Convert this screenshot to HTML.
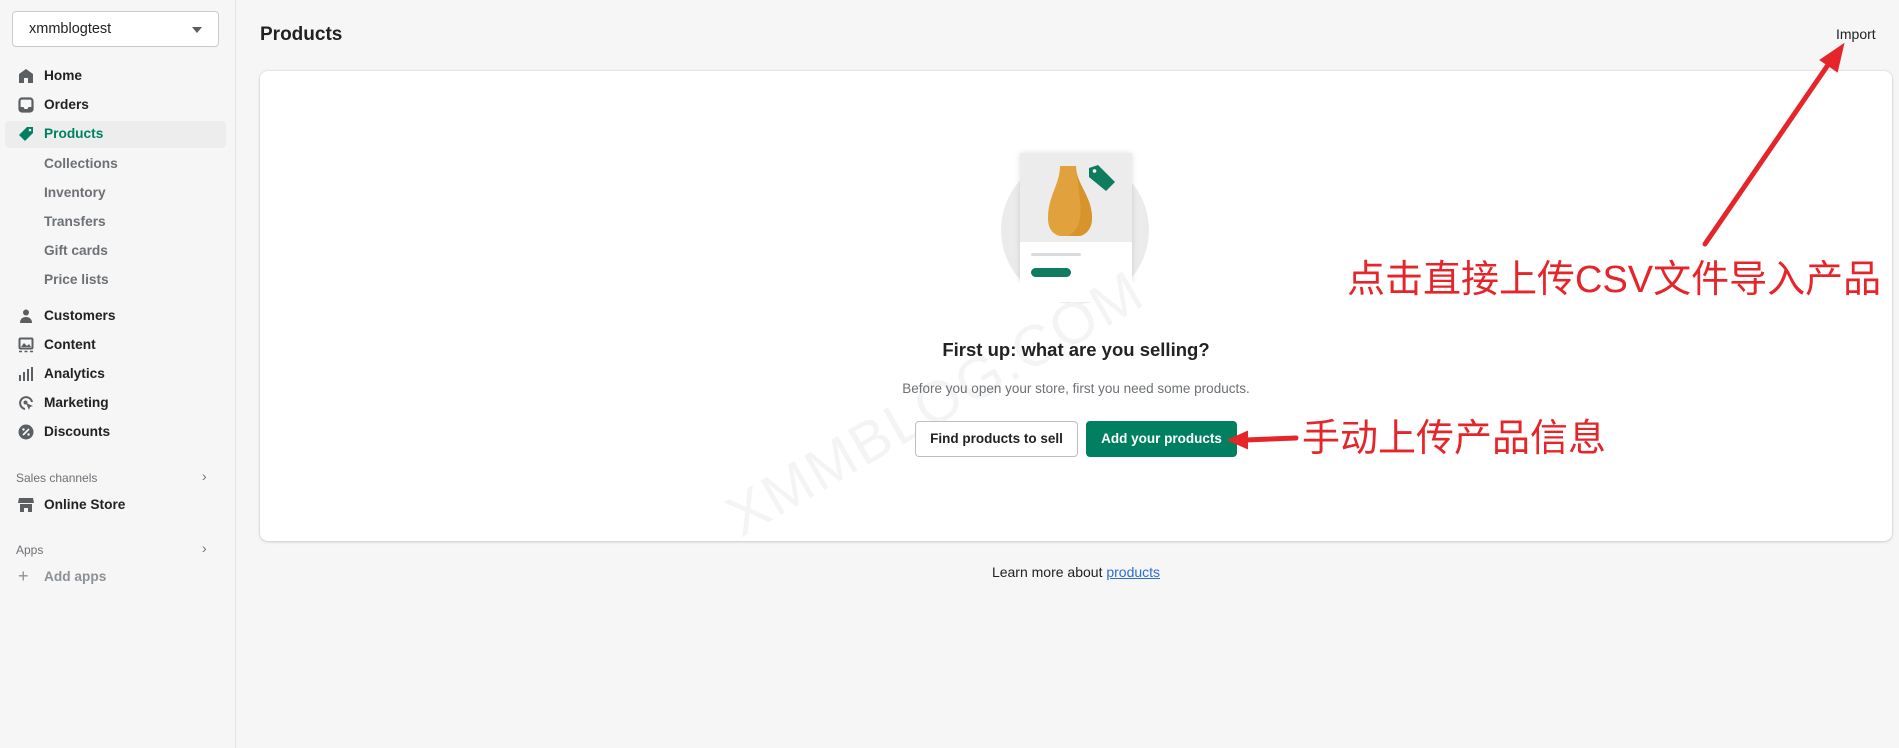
<!DOCTYPE html>
<html><head><meta charset="utf-8"><style>
*{box-sizing:border-box;margin:0;padding:0}
body{width:1899px;height:748px;background:#f6f6f7;font-family:"Liberation Sans","Noto Sans CJK SC",sans-serif;color:#202223;position:relative;overflow:hidden}
.sb{position:absolute;left:0;top:0;width:236px;height:748px;border-right:1px solid #e1e3e5;background:#f6f6f7}
.dd{position:absolute;left:12px;top:11px;width:207px;height:36px;border:1px solid #c9cccf;border-radius:4px;background:#fff;font-size:14.5px;padding:9px 16px}
.dd:after{content:"";position:absolute;right:16px;top:15px;border:5px solid transparent;border-top:6px solid #5c5f62}
.it{position:absolute;left:44px;font-size:13.7px;font-weight:600;color:#202223;line-height:18px}
.sub{font-weight:600;color:#6d7175}
.ic{position:absolute;left:18px;width:16px;height:16px}
.sec{position:absolute;left:16px;font-size:12px;color:#6d7175}
.chev{position:absolute;left:202px;font-size:14px;color:#6d7175}
.card{position:absolute;left:260px;top:71px;width:1632px;height:470px;background:#fff;border-radius:8px;box-shadow:0 0 0 1px rgba(63,63,68,.06),0 1px 3px rgba(63,63,68,.18)}
.btn{position:absolute;top:421px;height:36px;border-radius:4px;font-size:13.5px;font-weight:600;text-align:center;line-height:34px}
.red{position:absolute;color:#e5252a;font-size:38px;font-family:"Liberation Sans","Noto Sans CJK SC",sans-serif;white-space:nowrap;line-height:1}
</style></head><body>
<div class="sb">
<div class="dd">xmmblogtest</div>
<div style="position:absolute;left:5px;top:121px;width:221px;height:27px;background:#ededee;border-radius:4px"></div>
<svg class="ic" style="top:68px" viewBox="0 0 16 16"><path d="M8 1L1 6v9h5v-5h4v5h5V6z" fill="#5c5f62"/></svg>
<div class="it" style="top:67px">Home</div>
<svg class="ic" style="top:97px" viewBox="0 0 16 16"><rect x="1.5" y="1.5" width="13" height="13" rx="2.5" fill="none" stroke="#5c5f62" stroke-width="2.2"/><path d="M1.5 10h4l1 2h3l1-2h4v4.5h-13z" fill="#5c5f62"/></svg>
<div class="it" style="top:96px">Orders</div>
<svg class="ic" style="top:126px" viewBox="0 0 16 16"><path d="M9 1h6v6l-8 8-6-6z" fill="#008060"/><circle cx="12" cy="4" r="1.3" fill="#fff"/></svg>
<div class="it" style="top:125px;color:#008060">Products</div>
<div class="it sub" style="top:155px">Collections</div>
<div class="it sub" style="top:184px">Inventory</div>
<div class="it sub" style="top:213px">Transfers</div>
<div class="it sub" style="top:242px">Gift cards</div>
<div class="it sub" style="top:271px">Price lists</div>
<svg class="ic" style="top:308px" viewBox="0 0 16 16"><circle cx="8" cy="4.5" r="3" fill="#5c5f62"/><path d="M2 15c0-4 2.5-6 6-6s6 2 6 6z" fill="#5c5f62"/></svg>
<div class="it" style="top:307px">Customers</div>
<svg class="ic" style="top:337px" viewBox="0 0 16 16"><rect x="1.5" y="1.5" width="13" height="10" rx="1" fill="none" stroke="#5c5f62" stroke-width="2"/><path d="M3 10l3-4 3 3 2-2 2 3z" fill="#5c5f62"/><path d="M1 14.5h3M6.5 14.5h3M12 14.5h3" stroke="#5c5f62" stroke-width="1.6"/></svg>
<div class="it" style="top:336px">Content</div>
<svg class="ic" style="top:366px" viewBox="0 0 16 16"><path d="M2 9v6M6 6v9M10 3v12M14 1v14" stroke="#5c5f62" stroke-width="2"/></svg>
<div class="it" style="top:365px">Analytics</div>
<svg class="ic" style="top:395px" viewBox="0 0 16 16"><path d="M14 7A6 6 0 1 0 7 14" fill="none" stroke="#5c5f62" stroke-width="2"/><circle cx="7.5" cy="7.5" r="2" fill="#5c5f62"/><path d="M8 8l7 3-3 1-1 3z" fill="#5c5f62"/></svg>
<div class="it" style="top:394px">Marketing</div>
<svg class="ic" style="top:424px" viewBox="0 0 16 16"><circle cx="8" cy="8" r="7.5" fill="#5c5f62"/><path d="M5 11l6-6" stroke="#fff" stroke-width="1.6"/><circle cx="5.5" cy="5.5" r="1.2" fill="#fff"/><circle cx="10.5" cy="10.5" r="1.2" fill="#fff"/></svg>
<div class="it" style="top:423px">Discounts</div>
<div class="sec" style="top:471px">Sales channels</div><div class="chev" style="top:468px">&#x203A;</div>
<svg class="ic" style="top:497px" viewBox="0 0 16 16"><path d="M1 1h14l1 5H0z" fill="#5c5f62"/><path d="M2 7h12v8h-4v-4H6v4H2z" fill="#5c5f62"/></svg>
<div class="it" style="top:496px">Online Store</div>
<div class="sec" style="top:543px">Apps</div><div class="chev" style="top:540px">&#x203A;</div>
<div style="position:absolute;left:18px;top:568px;font-size:18px;color:#8c9196;line-height:16px">+</div>
<div class="it sub" style="top:568px;color:#8c9196">Add apps</div>
</div>

<div style="position:absolute;left:260px;top:24px;font-size:19px;font-weight:600">Products</div>
<div style="position:absolute;left:1836px;top:26px;font-size:14px">Import</div>

<div class="card"></div>
<div style="position:absolute;left:1001px;top:156px;width:148px;height:148px;border-radius:50%;background:#ebebeb"></div>
<div style="position:absolute;left:1020px;top:153px;width:112px;height:130px;background:#fff;box-shadow:0 0 6px rgba(0,0,0,.12)"></div>
<div style="position:absolute;left:1020px;top:153px;width:112px;height:89px;background:#ececec"></div>
<div style="position:absolute;left:960px;top:282px;width:230px;height:20px;background:#fff"></div>
<svg style="position:absolute;left:1048px;top:164px" width="56" height="78" viewBox="0 0 56 78"><path d="M12 2h16c0 18 16 30 16 52 0 10-5 16-12 18H12C4 70 0 64 0 54 0 32 12 20 12 2z" fill="#e1a13d"/><path d="M28 2c0 18 16 30 16 52 0 10-5 16-12 18H20c12-6 14-20 12-35z" fill="#d8942a"/></svg>
<svg style="position:absolute;left:1086px;top:163px" width="34" height="34" viewBox="0 0 34 34"><path d="M3 5l9-3 17 17-9 9L3 14z" fill="#0f7b5f"/><circle cx="8.5" cy="8" r="1.8" fill="#fff"/></svg>
<div style="position:absolute;left:1031px;top:253px;width:50px;height:3px;background:#d9dcde;border-radius:2px"></div>
<div style="position:absolute;left:1031px;top:268px;width:40px;height:9px;background:#0f7b5f;border-radius:5px"></div>

<div style="position:absolute;left:700px;top:370px;font-size:58px;color:#f4f4f4;transform:rotate(-30deg);letter-spacing:2px;white-space:nowrap">XMMBLOG.COM</div>

<div style="position:absolute;left:260px;width:1632px;top:339px;text-align:center;font-size:18.5px;font-weight:600">First up: what are you selling?</div>
<div style="position:absolute;left:260px;width:1632px;top:381px;text-align:center;font-size:13.5px;color:#6d7175">Before you open your store, first you need some products.</div>
<div class="btn" style="left:915px;width:163px;border:1px solid #babfc3;background:#fff">Find products to sell</div>
<div class="btn" style="left:1086px;width:151px;background:#008060;color:#fff;line-height:36px">Add your products</div>
<div style="position:absolute;left:260px;width:1632px;top:564px;text-align:center;font-size:14px">Learn more about <span style="color:#2c6ecb;text-decoration:underline">products</span></div>

<svg style="position:absolute;left:0;top:0" width="1899" height="748"><g stroke="#e5252a" stroke-width="5" stroke-linecap="round" fill="#e5252a"><line x1="1705" y1="244" x2="1830" y2="62"/><path d="M1843 45l-6 26-16-11z" stroke-width="2"/><line x1="1296" y1="438" x2="1245" y2="440"/><path d="M1229 440l18-8v16z" stroke-width="2"/></g></svg>
<div class="red" style="left:1347px;top:261px">点击直接上传CSV文件导入产品</div>
<div class="red" style="left:1302px;top:420px">手动上传产品信息</div>
</body></html>
